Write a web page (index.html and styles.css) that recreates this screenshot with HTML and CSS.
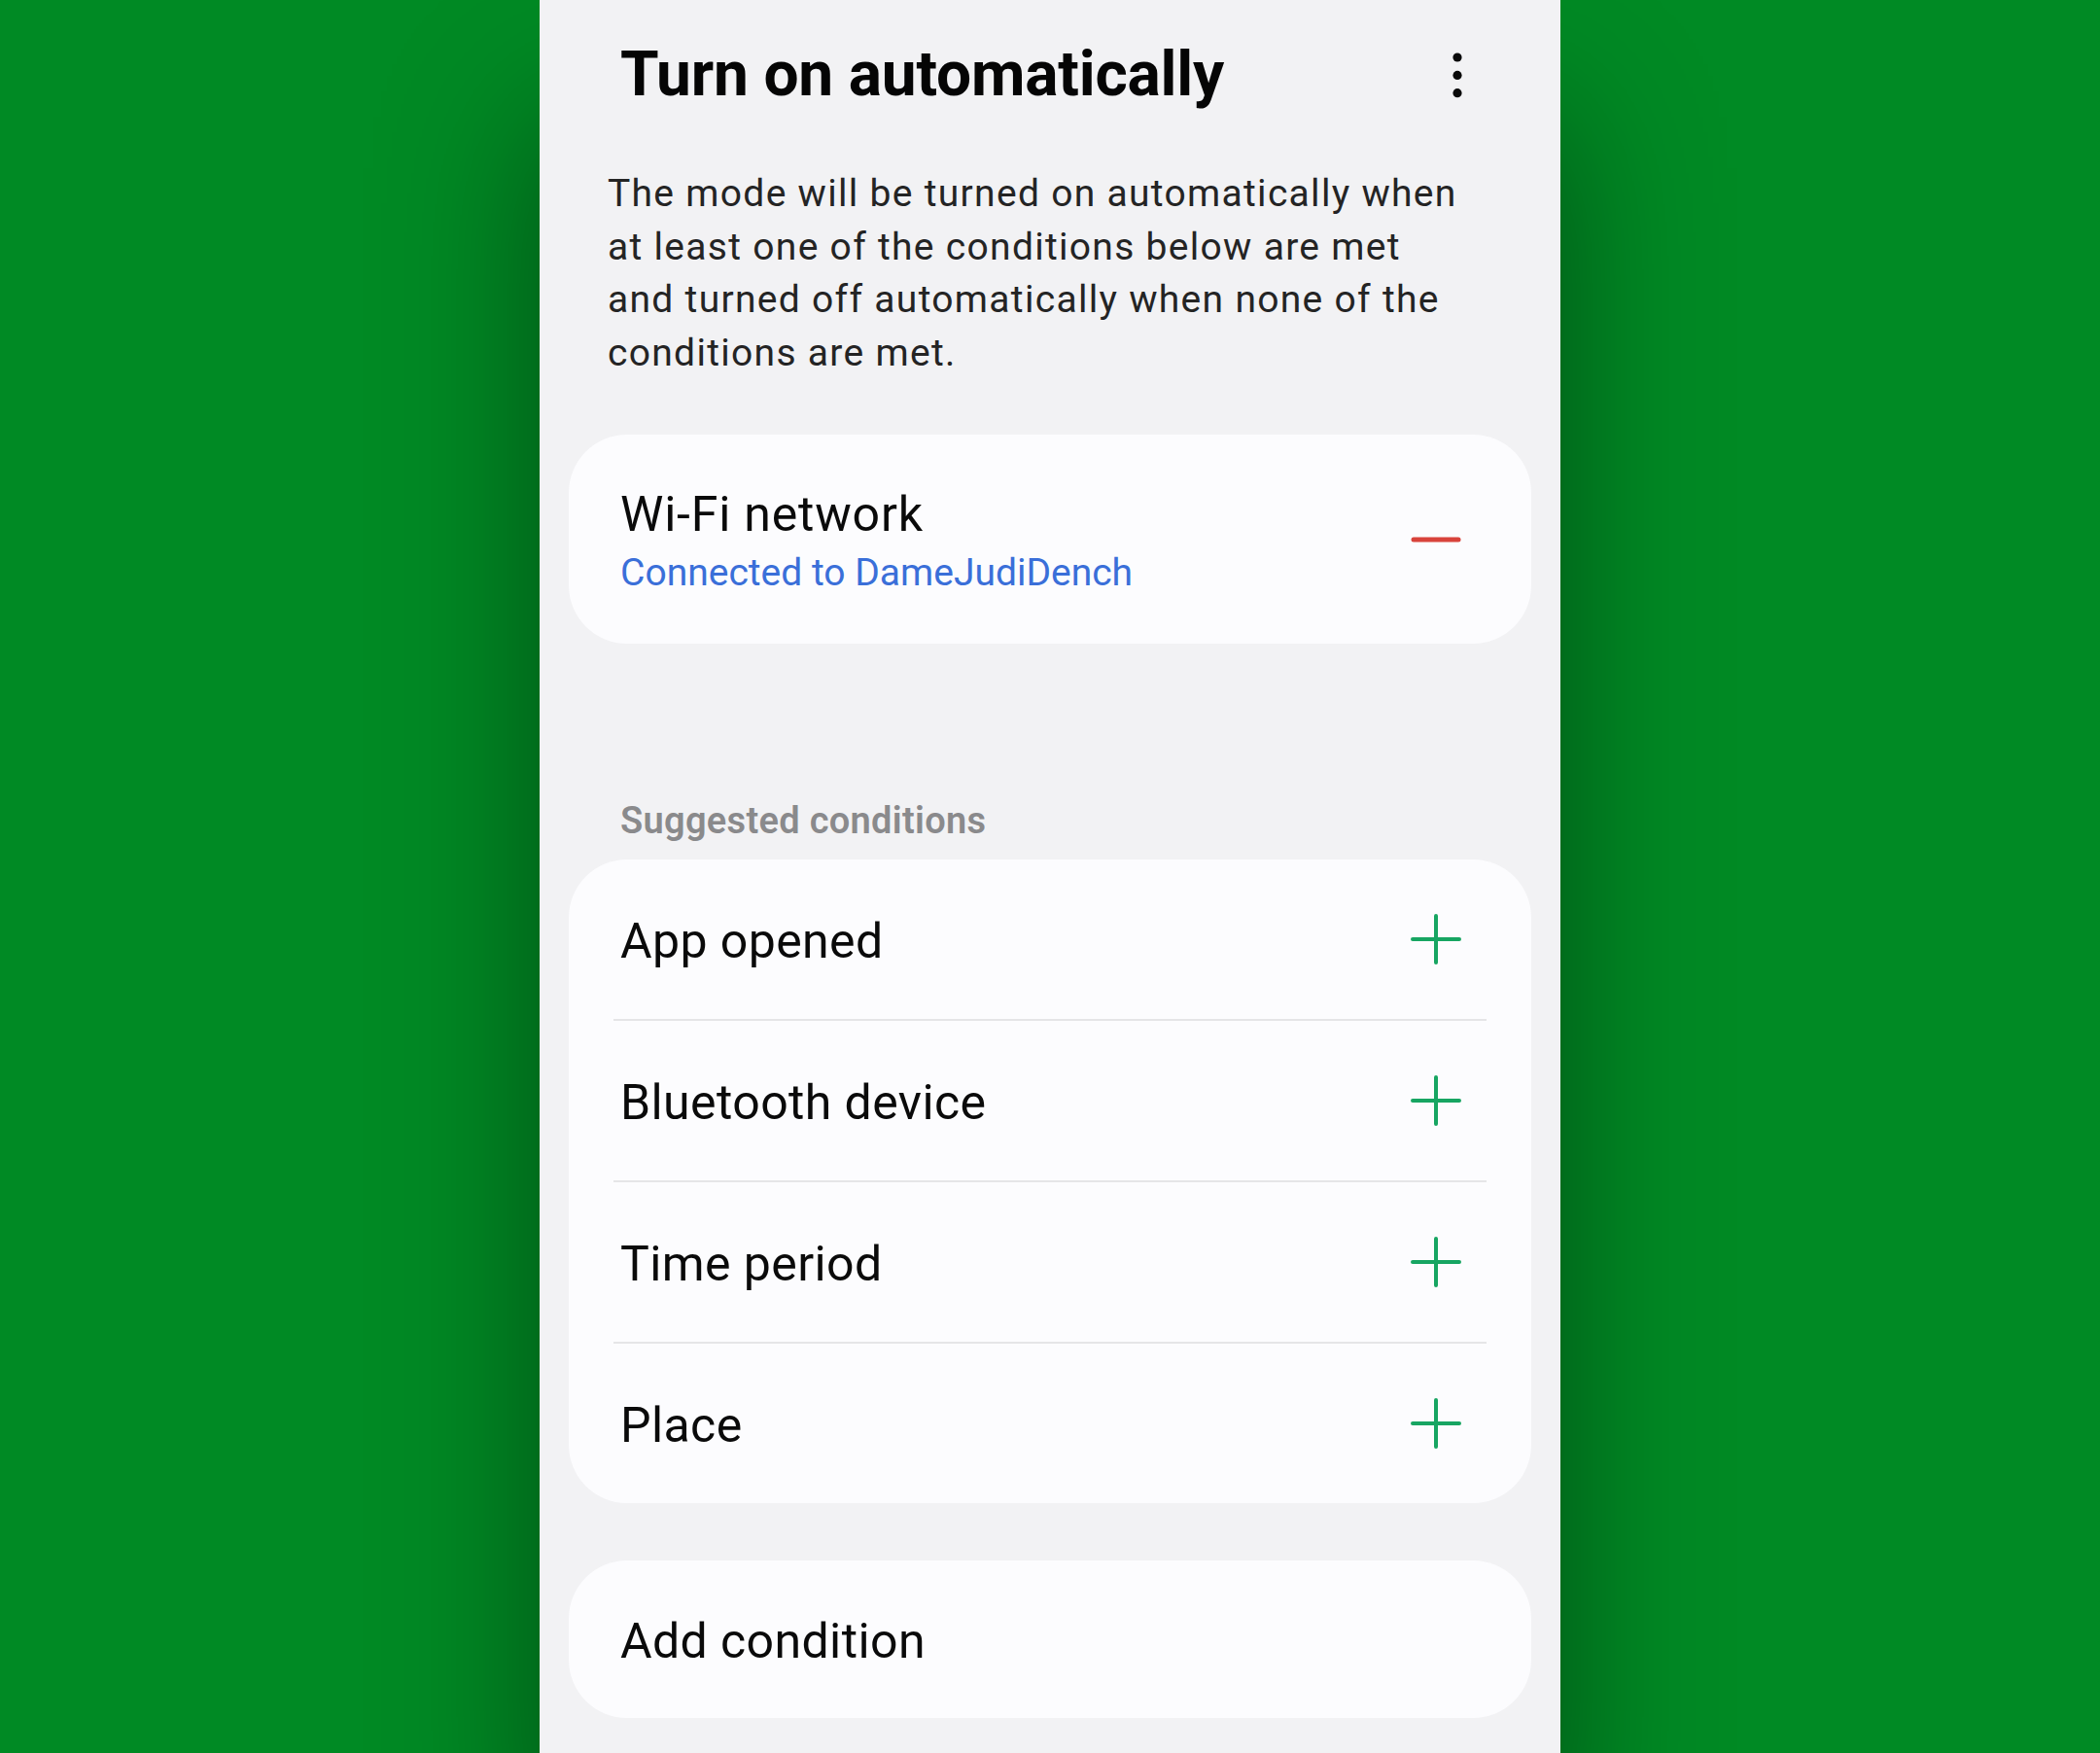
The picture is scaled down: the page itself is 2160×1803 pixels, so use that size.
FILE: index.html
```html
<!DOCTYPE html>
<html lang="en">
<head>
<meta charset="utf-8">
<title>Turn on automatically</title>
<link rel="stylesheet" href="styles.css">
</head>
<body>
<div class="stage">
  <main class="panel">
    <header class="header">
      <h1 class="title">Turn on automatically</h1>
      <button class="more" aria-label="More options">
        <svg width="12" height="48" viewBox="0 0 12 48">
          <circle cx="6" cy="6" r="4.6" fill="#0a0a0a"/>
          <circle cx="6" cy="24.4" r="4.6" fill="#0a0a0a"/>
          <circle cx="6" cy="42.7" r="4.6" fill="#0a0a0a"/>
        </svg>
      </button>
    </header>

    <p class="desc">The mode will be turned on automatically when at least one of the conditions below are met and turned off automatically when none of the conditions are met.</p>

    <section class="card wifi">
      <div class="wifi-text">
        <div class="wifi-title">Wi-Fi network</div>
        <div class="wifi-sub">Connected to DameJudiDench</div>
      </div>
      <span class="icon icon-minus">
        <svg width="52" height="52" viewBox="0 0 52 52">
          <line x1="3" y1="26" x2="49" y2="26" stroke="#d8433b" stroke-width="5" stroke-linecap="round"/>
        </svg>
      </span>
    </section>

    <h2 class="section-label">Suggested conditions</h2>

    <section class="card list">
      <div class="row"><span class="row-label">App opened</span><span class="icon"><svg width="52" height="52" viewBox="0 0 52 52"><path d="M26 2 V50 M2 26 H50" stroke="#17a562" stroke-width="4" stroke-linecap="round" fill="none"/></svg></span></div>
      <div class="divider"></div>
      <div class="row"><span class="row-label">Bluetooth device</span><span class="icon"><svg width="52" height="52" viewBox="0 0 52 52"><path d="M26 2 V50 M2 26 H50" stroke="#17a562" stroke-width="4" stroke-linecap="round" fill="none"/></svg></span></div>
      <div class="divider"></div>
      <div class="row"><span class="row-label">Time period</span><span class="icon"><svg width="52" height="52" viewBox="0 0 52 52"><path d="M26 2 V50 M2 26 H50" stroke="#17a562" stroke-width="4" stroke-linecap="round" fill="none"/></svg></span></div>
      <div class="divider"></div>
      <div class="row"><span class="row-label">Place</span><span class="icon"><svg width="52" height="52" viewBox="0 0 52 52"><path d="M26 2 V50 M2 26 H50" stroke="#17a562" stroke-width="4" stroke-linecap="round" fill="none"/></svg></span></div>
    </section>

    <section class="card add">
      <span class="row-label">Add condition</span>
    </section>
  </main>
</div>
</body>
</html>
```

FILE: styles.css
```css
* { box-sizing: border-box; }

html, body {
  margin: 0;
  padding: 0;
  height: 100%;
}

body {
  background: #008a24;
  font-family: Roboto, "Noto Sans", "Liberation Sans", sans-serif;
  overflow: hidden;
}

.stage {
  display: flex;
  justify-content: center;
  height: 1803px;
}

.panel {
  width: 1050px;
  height: 1803px;
  background: #f2f2f4;
  box-shadow: 0 120px 150px rgba(0, 0, 0, 0.42);
  padding: 37px 30px 0 30px;
  display: flex;
  flex-direction: column;
}

.header {
  height: 80px;
  display: flex;
  align-items: center;
  justify-content: space-between;
  padding-left: 53px;
  padding-right: 70px;
}

.title {
  margin: 0;
  font-size: 64px;
  line-height: 80px;
  font-weight: 700;
  color: #050505;
  letter-spacing: -0.2px;
}

.more {
  border: 0;
  background: none;
  padding: 0;
  display: flex;
  align-items: center;
}

.desc {
  margin: 55px 0 0 40px;
  width: 880px;
  font-size: 39px;
  line-height: 54.5px;
  letter-spacing: 1.3px;
  color: #242424;
}

.card {
  background: #fcfcfe;
  border-radius: 60px;
}

.wifi {
  margin-top: 57px;
  padding: 54px 72px 44px 53px;
  display: flex;
  align-items: center;
  justify-content: space-between;
}

.wifi-title {
  font-size: 50px;
  line-height: 57px;
  letter-spacing: 0.8px;
  color: #0a0a0a;
}

.wifi-sub {
  margin-top: 3px;
  font-size: 39px;
  line-height: 57px;
  color: #3a6fd9;
}

.icon {
  display: flex;
  width: 52px;
  height: 52px;
}

.icon-minus {
  margin-bottom: 10px;
}

.section-label {
  margin: 157px 0 15px 53px;
  font-size: 38px;
  line-height: 50px;
  font-weight: 600;
  letter-spacing: 0.3px;
  color: #8a8a8c;
}

.list {
  display: flex;
  flex-direction: column;
}

.row {
  height: 164px;
  display: flex;
  align-items: center;
  justify-content: space-between;
  padding: 0 72px 0 53px;
}

.row-label {
  padding-top: 4px;
  font-size: 50px;
  line-height: 60px;
  letter-spacing: 0.4px;
  color: #0a0a0a;
}

.divider {
  height: 2px;
  margin: 0 46px;
  background: #e5e5e7;
}

.add {
  margin-top: 59px;
  height: 162px;
  display: flex;
  align-items: center;
  padding: 0 53px;
}
```
